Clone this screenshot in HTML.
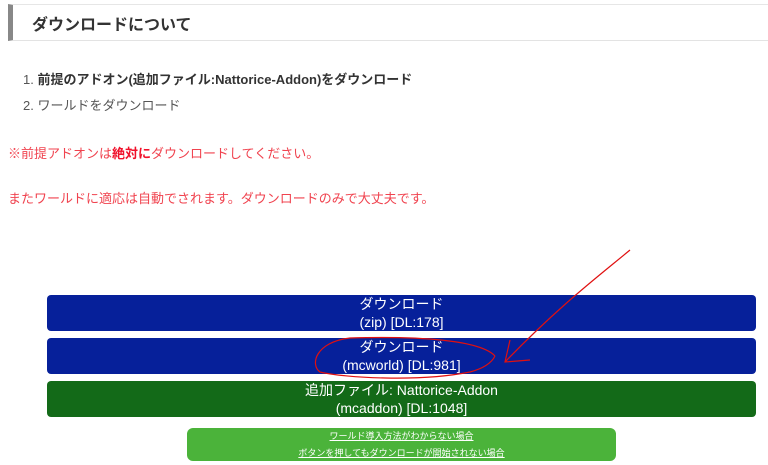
<!DOCTYPE html>
<html><head><meta charset="utf-8"><style>
body{margin:0;width:768px;height:465px;background:#fff;font-family:"Liberation Sans","Noto Sans CJK JP",sans-serif;position:relative;overflow:hidden}
.h{position:absolute;left:8px;top:4px;width:760px;height:37px;border-top:1px solid #e6e6e6;border-bottom:1px solid #e3e3e3;border-left:5px solid #888;box-sizing:border-box}
.h span{position:absolute;left:19px;top:6px;font-size:16px;font-weight:bold;color:#333}
.t{position:absolute;font-size:13px;white-space:nowrap}
.b{position:absolute;left:47px;width:709px;height:36px;border-radius:4px;color:#fff;text-align:center;font-size:14px;line-height:18px;box-sizing:border-box;padding-top:0}
.g{position:absolute;left:187px;top:428px;width:429px;height:33px;border-radius:6px;background:#4bb33a;color:#fff;text-align:center;font-size:9px;line-height:17px;text-decoration:underline}
</style></head><body>
<div class="h"><span>ダウンロードについて</span></div>
<div class="t" style="left:23px;top:69px;color:#333"><span style="color:#555">1.</span> <b>前提のアドオン(追加ファイル:Nattorice-Addon)をダウンロード</b></div>
<div class="t" style="left:23px;top:95px;color:#555">2. ワールドをダウンロード</div>
<div class="t" style="left:8px;top:143px;color:#f0434f">※前提アドオンは<b style="color:#f0102a">絶対に</b>ダウンロードしてください。</div>
<div class="t" style="left:8px;top:188px;color:#f0434f">またワールドに適応は自動でされます。ダウンロードのみで大丈夫です。</div>
<div class="b" style="top:295px;background:#06209a">ダウンロード<br>(zip) [DL:178]</div>
<div class="b" style="top:338px;background:#06209a">ダウンロード<br>(mcworld) [DL:981]</div>
<div class="b" style="top:381px;background:#136a18">追加ファイル: Nattorice-Addon<br>(mcaddon) [DL:1048]</div>
<div class="g">ワールド導入方法がわからない場合<br>ボタンを押してもダウンロードが開始されない場合</div>
<svg style="position:absolute;left:0;top:0" width="768" height="465" fill="none" stroke="#e01010" stroke-width="1.2">
<path d="M495,356 C480,340 420,336 350,338 C315,342 310,365 320,372 C345,378 420,382 470,372 C485,368 492,362 495,356"/>
<path d="M630,250 C600,275 560,305 505,362 M510,340 L505,362 L530,360"/>
</svg>
</body></html>
